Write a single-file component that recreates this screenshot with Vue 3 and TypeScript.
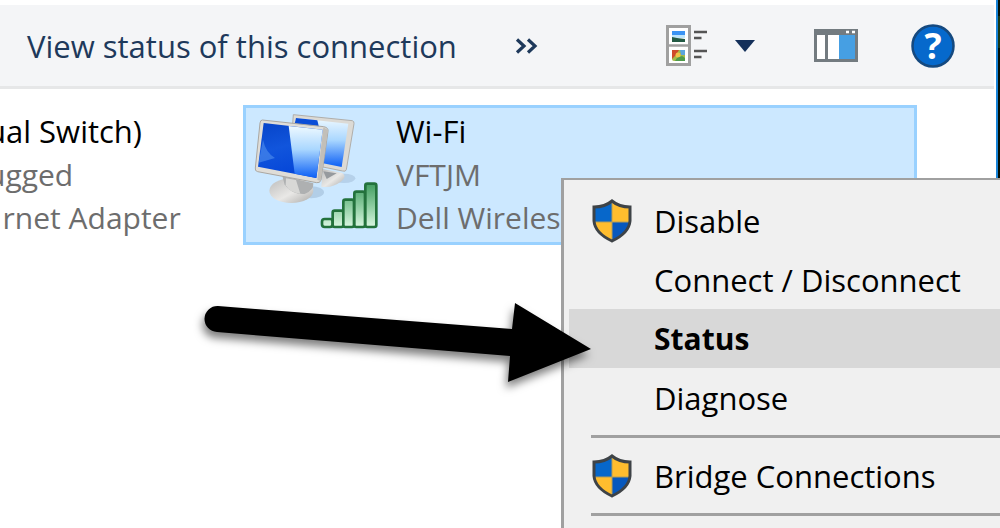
<script setup lang="ts">
interface MenuEntry {
  label: string
  shield?: boolean
  active?: boolean
  divider?: boolean
}

const adapterLines: string[] = ['ual Switch)', 'ugged', '\u00a0\u00a0rnet Adapter']
const wifiLines: string[] = ['Wi-Fi', 'VFTJM', 'Dell Wireless']

const menu: MenuEntry[] = [
  { label: 'Disable', shield: true },
  { label: 'Connect / Disconnect' },
  { label: 'Status', active: true },
  { label: 'Diagnose', divider: true },
  { label: 'Bridge Connections', shield: true, divider: true },
]
</script>

<template>
  <div class="screen">
    <main class="window">
      <header class="toolbar">
        <button class="command" type="button">View status of this connection</button>
        <button class="icon-button more" type="button" aria-label="More commands">
          <svg width="24" height="16" viewBox="0 0 24 16">
            <path d="M2 1.500L9 8L2 14.500M13 1.500L20 8L13 14.500" fill="none" stroke="#1e395b" stroke-width="3.200" />
          </svg>
        </button>
        <div class="tools">
          <button class="icon-button" type="button" aria-label="Change view">
            <svg width="42" height="42" viewBox="0 0 42 42">
              <rect x="1.500" y="1.500" width="22" height="38" fill="#fff" stroke="#a0a0a0" stroke-width="3" />
              <path d="M2 20.500H24" stroke="#a0a0a0" stroke-width="2.500" />
              <rect x="6" y="6" width="13" height="5" fill="#3b94f4" />
              <rect x="6" y="10" width="13" height="3" fill="#bfe5fa" />
              <path d="M6 12L11 13L19 14V17H6Z" fill="#245b45" />
              <rect x="6" y="25" width="13" height="11" rx="2" fill="#a5ba4a" />
              <path d="M6 25H13L10 30L6 34Z" fill="#cf4a2c" />
              <path d="M14 25H19V30H15Z" fill="#5ba5dd" />
              <circle cx="12" cy="30" r="2.500" fill="#f0c34a" />
              <path d="M11 33L16 31L19 33V36H9Z" fill="#4e9b4a" />
              <path d="M28 7H41M28 13H35.500M28 26H41M28 32H35.500" stroke="#555" stroke-width="2.500" />
            </svg>
          </button>
          <button class="icon-button drop" type="button" aria-label="View options">
            <svg width="20" height="12" viewBox="0 0 20 12"><path d="M0 0H20L10 12Z" fill="#14305a" /></svg>
          </button>
          <button class="icon-button pane" type="button" aria-label="Show the preview pane">
            <svg width="44" height="33" viewBox="0 0 44 33">
              <rect width="44" height="33" fill="#737b80" />
              <rect x="3" y="6" width="8" height="24" fill="#fff" />
              <rect x="14" y="6" width="11" height="24" fill="#fff" />
              <rect x="25" y="6" width="16" height="24" fill="#469fe3" />
              <path d="M32 3H35M38 3H41" stroke="#fff" stroke-width="2.500" />
            </svg>
          </button>
          <button class="icon-button help" type="button" aria-label="Help">
            <svg width="44" height="44" viewBox="0 0 44 44">
              <circle cx="22" cy="22" r="20.500" fill="#0669cc" stroke="#15497f" stroke-width="2.500" />
              <text x="22" y="35" text-anchor="middle" class="mark">?</text>
            </svg>
          </button>
        </div>
      </header>

      <section class="connections">
        <article class="tile clipped">
          <div class="details">
            <span v-for="(line, i) in adapterLines" :key="line" :class="{ title: i === 0 }">{{ line }}</span>
          </div>
        </article>
        <article class="tile selected">
          <svg class="network" width="130" height="120" viewBox="30 39 390 360">
            <defs>
              <linearGradient id="screenBlue" x1="0" y1="0" x2="0.300" y2="1">
                <stop offset="0" stop-color="#0644c9" />
                <stop offset="0.500" stop-color="#1155dc" />
                <stop offset="1" stop-color="#0546d8" />
              </linearGradient>
              <linearGradient id="glare" x1="0" y1="0" x2="0" y2="1">
                <stop offset="0" stop-color="#eef9ff" />
                <stop offset="0.450" stop-color="#aad7ff" />
                <stop offset="1" stop-color="#0c5ff5" />
              </linearGradient>
              <linearGradient id="base" x1="0" y1="0" x2="1" y2="1">
                <stop offset="0" stop-color="#bcbcbb" />
                <stop offset="0.550" stop-color="#e9e8e6" />
                <stop offset="1" stop-color="#aaa9a7" />
              </linearGradient>
              <linearGradient id="bars" x1="0" y1="255" x2="0" y2="393" gradientUnits="userSpaceOnUse">
                <stop offset="0" stop-color="#3c9a5b" />
                <stop offset="0.550" stop-color="#91cfa4" />
                <stop offset="1" stop-color="#ddf8e4" />
              </linearGradient>
            </defs>
            <ellipse cx="312" cy="244" rx="34" ry="14" fill="#8ca6c3" opacity="0.350" />
            <path d="M248 216L307 228Q322 238 304 253Q276 275 244 269Z" fill="url(#base)" />
            <path d="M250 223L290 229L260 246Z" fill="#969a9e" />
            <path d="M160 53L337 71Q343 73 342 80L319 218Q317 225 308 222L150 190Z" fill="#dcdad5" stroke="#b0aeaa" stroke-width="3" />
            <path d="M168 63L325 80L305 210L155 180Z" fill="url(#glare)" />
            <path d="M168 63L232 70L237 91L164 80Z" fill="#0b4dd7" />
            <ellipse cx="214" cy="286" rx="38" ry="18" fill="#829dbb" opacity="0.350" />
            <ellipse cx="154" cy="281" rx="66" ry="37" fill="url(#base)" />
            <path d="M127 237L220 259Q222 280 194 291Q157 293 134 263Z" fill="#aeb0b1" />
            <path d="M138 244L168 249L181 290Q150 288 137 265Z" fill="#d8d8d6" />
            <path d="M67 69L251 89Q266 92 264 103L243 249Q240 259 230 257L53 224Q44 222 46 213L60 78Q61 69 67 69Z" fill="#dfddd8" stroke="#aaa7a2" stroke-width="3" />
            <path d="M250 91L264 99L242 252L232 249Z" fill="#c2bfb9" />
            <path d="M71 78L248 98L229 243L54 209Z" fill="url(#screenBlue)" />
            <path d="M146 87L248 98L229 243L164 230Z" fill="url(#glare)" />
            <path d="M69 128Q77 166 105 183L56 197Z" fill="#4d8cec" opacity="0.650" />
            <g fill="url(#bars)" stroke="#23723c" stroke-width="8">
              <rect x="246" y="366" width="32" height="24" rx="8" />
              <rect x="278" y="341" width="32" height="49" rx="6" />
              <rect x="310" y="308" width="32" height="82" rx="6" />
              <rect x="343" y="284" width="32" height="106" rx="6" />
              <rect x="376" y="260" width="33" height="130" rx="6" />
            </g>
          </svg>
          <div class="details">
            <span v-for="(line, i) in wifiLines" :key="line" :class="{ title: i === 0 }">{{ line }}</span>
          </div>
        </article>
      </section>
    </main>
    <aside class="desktop"></aside>

    <div class="menu" role="menu">
      <template v-for="entry in menu" :key="entry.label">
        <button class="entry" :class="{ active: entry.active }" type="button" role="menuitem">
          <span class="glyph">
            <svg v-if="entry.shield" width="40" height="44" viewBox="0 0 40 44">
              <path d="M20 2Q13 8 2 8V22Q3 34 20 42Q37 34 38 22V8Q27 8 20 2Z" fill="#ffbd2e" />
              <path d="M20 3Q13 8 2 8V23H20Z" fill="#0767ca" />
              <path d="M20 23H38Q37 34 20 42Z" fill="#0758bd" />
              <path d="M20 4V40M3 23H37" stroke="#b39c5b" stroke-width="1" />
              <path d="M20 2Q13 8 2 8V22Q3 34 20 42Q37 34 38 22V8Q27 8 20 2Z" fill="none" stroke="#3e4347" stroke-width="3" />
            </svg>
          </span>
          <span>{{ entry.label }}</span>
        </button>
        <hr v-if="entry.divider" />
      </template>
    </div>

    <svg class="pointer" width="420" height="120" viewBox="190 290 420 120" aria-hidden="true">
      <path d="M218 306L512 329L515 303L591 349L508 382L510 356L217 332A13 13 0 0 1 218 306Z" />
    </svg>
  </div>
</template>

<style>
body {
  margin: 0;
  background: #fff;
}
</style>

<style scoped>
.screen {
  position: relative;
  display: flex;
  min-height: 100vh;
  overflow: hidden;
  font-family: "Open Sans", "Noto Sans", sans-serif;
  font-size: 31px;
  color: #000;
}
button {
  padding: 0;
  border: 0;
  background: none;
  font: inherit;
  color: inherit;
}
.window {
  flex: 1;
  min-width: 0;
  padding-top: 5px;
  border-right: 2px solid #1883d7;
}
.desktop {
  width: 2px;
  background: linear-gradient(#021008 16px, #173615 16px, #173615 48px, #020e05 48px);
}
.toolbar {
  display: flex;
  align-items: center;
  height: 81px;
  margin-right: 2px;
  padding: 0 39px 0 27px;
  background: #f4f5f7;
  border-bottom: 3px solid #e6e7e8;
}
.command {
  line-height: 42px;
  color: #1e395b;
  white-space: nowrap;
}
.icon-button {
  display: flex;
}
.more {
  margin-left: 58px;
}
.tools {
  display: flex;
  align-items: center;
  margin-left: auto;
}
.drop {
  margin-left: 27px;
}
.pane {
  margin-left: 59px;
}
.help {
  margin-left: 53px;
}
.mark {
  font-size: 36px;
  font-weight: 700;
  fill: #fff;
}
.connections {
  display: flex;
  margin: 16px 79px 0 0;
}
.tile {
  display: flex;
  box-sizing: border-box;
  border: 3px solid transparent;
  padding: 2px 4px;
}
.clipped {
  flex: 0 0 243px;
  margin-left: -20px;
  margin-right: 20px;
}
.selected {
  flex: 1;
  gap: 16px;
  background: #cce8ff;
  border-color: #99d1ff;
}
.network {
  flex: none;
}
.details {
  display: flex;
  flex-direction: column;
  padding-bottom: 1px;
  font-size: 30px;
  line-height: 43px;
  color: #6d6d6d;
  white-space: nowrap;
}
.title {
  font-size: 31px;
  color: #000;
}
.menu {
  position: absolute;
  top: 178px;
  right: 0;
  bottom: 0;
  left: 561px;
  padding: 11px 0 0 5px;
  overflow: hidden;
  background: #f0f0f0;
  border: solid #a0a0a0;
  border-width: 2px 0 0 3px;
}
.entry {
  display: flex;
  align-items: center;
  width: 100%;
  height: 59px;
  text-align: left;
  white-space: nowrap;
}
.active {
  background: #d8d8d8;
  font-size: 30px;
  font-weight: 700;
}
.glyph {
  display: flex;
  width: 62px;
  padding-left: 23px;
}
hr {
  height: 3px;
  margin: 8px 0 8px 22px;
  border: 0;
  background: #a0a0a0;
}
.pointer {
  position: absolute;
  top: 290px;
  left: 190px;
  filter: drop-shadow(-2px 6px 4px rgba(0, 0, 0, 0.5));
}
</style>
